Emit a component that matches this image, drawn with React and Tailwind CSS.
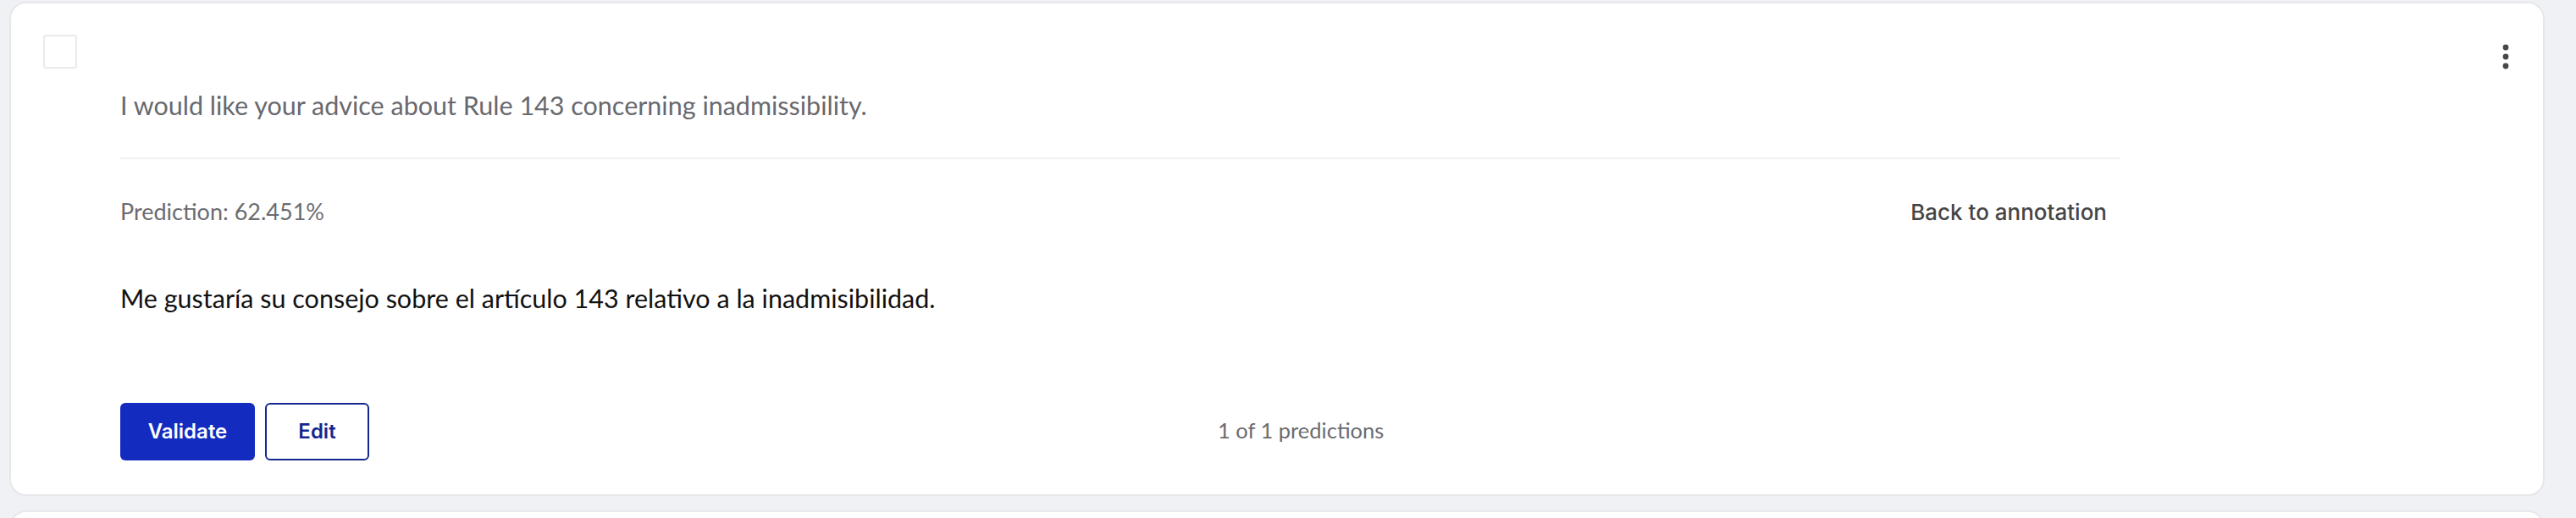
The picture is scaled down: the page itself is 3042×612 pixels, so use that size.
import React from "react";

const sourceFont = { fontFamily: "Lato, 'Noto Sans', sans-serif" };

const Kebab = () => (
  <svg width="24" height="32" viewBox="0 0 24 32" className="mt-[10px] fill-[#474747]">
    <circle cx="12" cy="5" r="3.4" />
    <circle cx="12" cy="16" r="3.4" />
    <circle cx="12" cy="27" r="3.4" />
  </svg>
);

const PredictionCard = () => {
  return (
    <div className="w-[2994px] ml-[11px] mt-[2px] rounded-[20px] border-2 border-[#e6e7eb] bg-white pt-[37px] pl-[38px] pr-[32px] pb-[40px] flex">
      <div className="w-[40px] h-[40px] border-2 border-[#e9eaee] rounded-[3px] shrink-0" />

      <div className="ml-[51px] w-[2362px] mt-[63px] font-['Lato','Noto_Sans',sans-serif]">
        <p className="text-[30.5px] leading-[40px] text-[#68696e]">
          I would like your advice about Rule 143 concerning inadmissibility.
        </p>
        <div className="mt-[42px] h-[2px] bg-[#f0f0f5]" />

        <div className="mt-[42px] flex items-center justify-between h-[40px]">
          <span className="text-[27px] text-[#6b6b6f]">Prediction: 62.451%</span>
          <button className="px-4 font-['Inter',sans-serif] font-medium text-[26px] text-[#454545]">
            Back to annotation
          </button>
        </div>

        <p className="mt-[62px] text-[30.5px] leading-[40px] text-[#111111]">
          Me gustaría su consejo sobre el artículo 143 relativo a la inadmisibilidad.
        </p>

        <div className="mt-[104px] flex items-center">
          <div className="flex gap-3 font-['Inter',sans-serif] font-semibold text-[24px]">
            <button className="w-[159px] h-[68px] rounded-[6px] bg-[#132bbf] text-white">
              Validate
            </button>
            <button className="w-[123px] h-[68px] rounded-[6px] border-2 border-[#14288f] text-[#14288f]">
              Edit
            </button>
          </div>
          <span className="ml-[1002px] mb-[4px] text-[25.5px] text-[#6b6b6f]" style={sourceFont}>
            1 of 1 predictions
          </span>
        </div>
      </div>

      <div className="flex-1" />
      <Kebab />
    </div>
  );
};

export default function App() {
  return (
    <div className="h-screen bg-[#f0f1f5] overflow-hidden">
      <PredictionCard />
      <div className="w-[2994px] ml-[11px] mt-[17px] h-[60px] rounded-[20px] border-2 border-[#e6e7eb] bg-white" />
    </div>
  );
}
